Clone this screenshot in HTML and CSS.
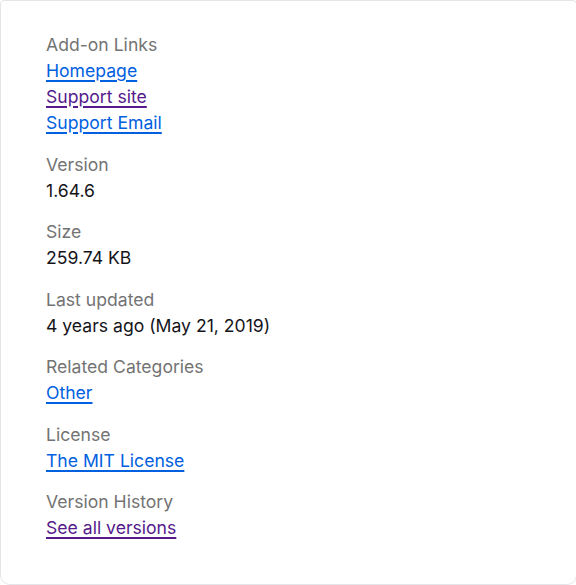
FILE: index.html
```html
<!DOCTYPE html>
<html lang="en">
<head>
<meta charset="utf-8">
<title>Add-on details</title>
<link rel="stylesheet" href="styles.css">
</head>
<body>
<section class="card">
  <dl class="meta">
    <div class="group">
      <dt class="label">Add-on Links</dt>
      <dd class="value"><a class="link" href="#">Homepage</a></dd>
      <dd class="value"><a class="link visited" href="#">Support site</a></dd>
      <dd class="value"><a class="link" href="#">Support Email</a></dd>
    </div>
    <div class="group">
      <dt class="label">Version</dt>
      <dd class="value">1.64.6</dd>
    </div>
    <div class="group">
      <dt class="label">Size</dt>
      <dd class="value">259.74 KB</dd>
    </div>
    <div class="group">
      <dt class="label">Last updated</dt>
      <dd class="value">4 years ago (May 21, 2019)</dd>
    </div>
    <div class="group">
      <dt class="label">Related Categories</dt>
      <dd class="value"><a class="link" href="#">Other</a></dd>
    </div>
    <div class="group">
      <dt class="label">License</dt>
      <dd class="value"><a class="link" href="#">The MIT License</a></dd>
    </div>
    <div class="group">
      <dt class="label">Version History</dt>
      <dd class="value"><a class="link visited" href="#">See all versions</a></dd>
    </div>
  </dl>
</section>
</body>
</html>
```

FILE: styles.css
```css
html, body {
  margin: 0;
  padding: 0;
  background: #ffffff;
}

body {
  font-family: Inter, "Noto Sans", "Liberation Sans", sans-serif;
  font-size: 17.6px;
  color: #15141a;
}

.card {
  box-sizing: border-box;
  width: 577px;
  height: 585px;
  border: 1px solid #e3e5e9;
  border-radius: 4px 4px 10px 10px;
  padding: 31px 45px 30px;
  background: #ffffff;
}

.meta {
  margin: 0;
  display: flex;
  flex-direction: column;
  gap: 15.5px;
}

.group {
  display: flex;
  flex-direction: column;
}

.label,
.value {
  margin: 0;
  line-height: 26px;
}

.label {
  color: #737373;
}

.value {
  color: #15141a;
}

.link {
  color: #0060df;
  text-decoration: underline;
  text-underline-offset: 3px;
  text-decoration-thickness: 1.5px;
}

.link.visited {
  color: #551a8b;
}
```
